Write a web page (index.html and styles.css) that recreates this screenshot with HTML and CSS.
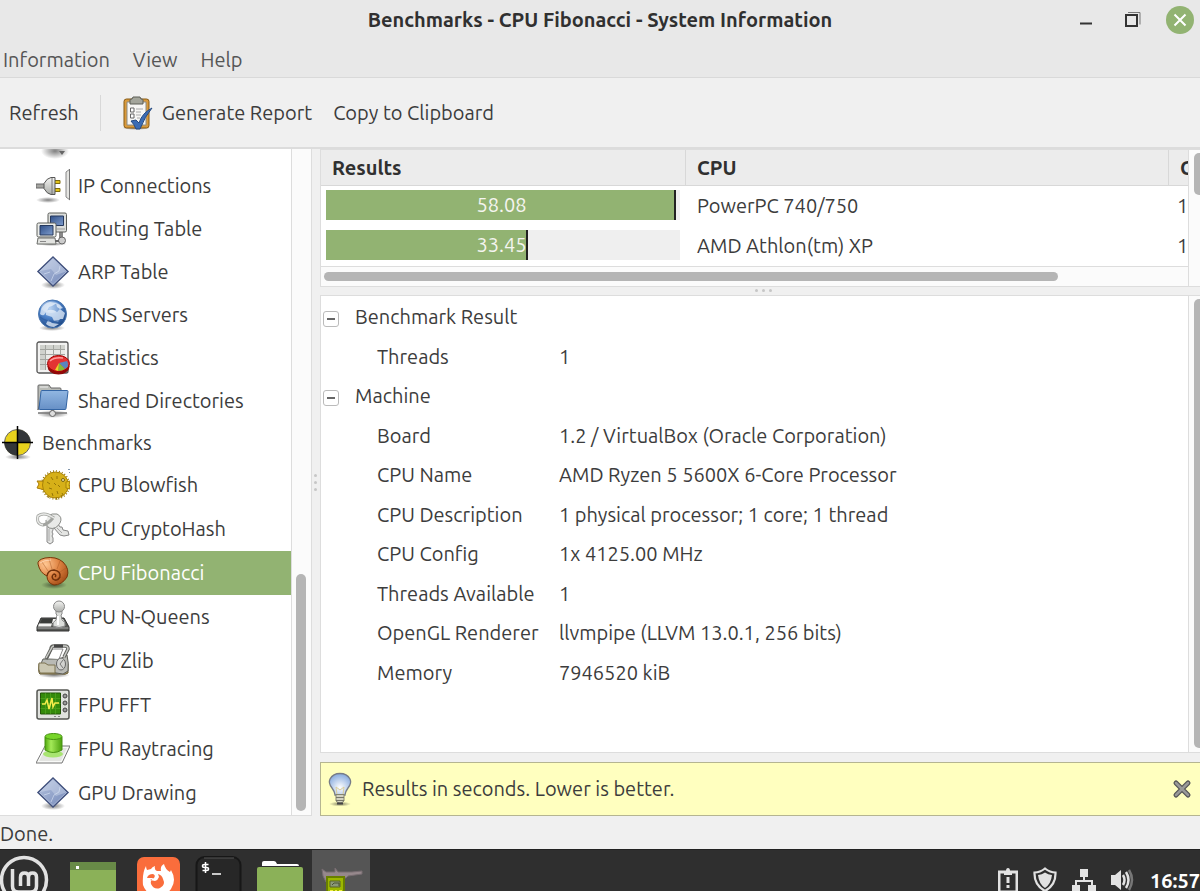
FILE: index.html
```html
<!DOCTYPE html>
<html lang="en">

<head>
    <meta charset="UTF-8">
    <title>Benchmarks - CPU Fibonacci - System Information</title>
    <link rel="stylesheet" href="styles.css">
</head>

<body>
    <!-- shared gradients -->
    <svg class="defs" aria-hidden="true">
        <defs>
            <linearGradient id="metal" x1="0" y1="0" x2="0" y2="1"><stop offset="0" stop-color="#f4f4f2"/><stop offset="1" stop-color="#aaaca8"/></linearGradient>
            <linearGradient id="screen" x1="0" y1="0" x2="1" y2="1"><stop offset="0" stop-color="#2f4f88"/><stop offset="1" stop-color="#7f9dcd"/></linearGradient>
            <linearGradient id="gem" x1="0" y1="0" x2="1" y2="1"><stop offset="0" stop-color="#b9c6e0"/><stop offset="1" stop-color="#7287b8"/></linearGradient>
            <radialGradient id="globe" cx=".4" cy=".3" r=".7"><stop offset="0" stop-color="#9fc2ec"/><stop offset=".5" stop-color="#4a7fc6"/><stop offset="1" stop-color="#204a87"/></radialGradient>
            <linearGradient id="folder" x1="0" y1="0" x2="0" y2="1"><stop offset="0" stop-color="#92b7e2"/><stop offset="1" stop-color="#6790c6"/></linearGradient>
            <radialGradient id="shell" cx=".25" cy=".25" r=".9"><stop offset="0" stop-color="#ffc793"/><stop offset=".5" stop-color="#df8443"/><stop offset="1" stop-color="#a14a14"/></radialGradient>
            <linearGradient id="can" x1="0" y1="0" x2="1" y2="0"><stop offset="0" stop-color="#4ea80c"/><stop offset=".35" stop-color="#a4ea58"/><stop offset="1" stop-color="#4ba00d"/></linearGradient>
            <radialGradient id="glass" cx=".5" cy=".65" r=".6"><stop offset="0" stop-color="#fff"/><stop offset="1" stop-color="#8fb0e0"/></radialGradient>
            <radialGradient id="shade"><stop offset="0" stop-color="#000" stop-opacity=".5"/><stop offset="1" stop-color="#000" stop-opacity="0"/></radialGradient>
        </defs>
        <symbol id="i-gem" viewBox="0 0 34 34">
            <ellipse cx="17" cy="30" rx="12" ry="4" fill="url(#shade)"/>
            <path d="M17 2 32 16.500 17 31 2 16.500z" fill="url(#gem)" stroke="#42527e" stroke-width="1.500"/>
            <path d="M17 4 30 16.500 20 20l-5-6-11 2z" fill="#dde5f3" opacity=".35"/>
            <path d="m15 26 3-7 5-3 1-5M8 19l6-2" fill="none" stroke="#dbe4f5" opacity=".6"/>
            <path d="M17 3.500 30.500 16.500 17 29.500 3.500 16.500z" fill="none" stroke="#cdd7eb" opacity=".5"/>
        </symbol>
    </svg>

    <div class="window">
        <header class="titlebar">
            <h1>Benchmarks - CPU Fibonacci - System Information</h1>
            <div class="window-buttons">
                <button aria-label="Minimize"><svg width="14" height="28"><path d="M1 17.500h12" stroke="#333" stroke-width="2"/></svg></button>
                <button aria-label="Restore"><svg width="18" height="28"><path d="M5 6.500h12v12" fill="none" stroke="#777" stroke-width="1"/><path d="M3 9h11v11H3z" fill="none" stroke="#333" stroke-width="2"/></svg></button>
                <button aria-label="Close"><svg width="28" height="28"><circle cx="14" cy="14" r="14" fill="#92b372"/><path d="m8.500 8.500 11 11m0-11-11 11" stroke="#fff" stroke-width="2"/></svg></button>
            </div>
        </header>

        <nav class="menubar">
            <button>Information</button>
            <button>View</button>
            <button>Help</button>
        </nav>

        <div class="toolbar">
            <button>Refresh</button>
            <div class="separator"></div>
            <button class="report">
                <svg width="32" height="34" viewBox="0 0 32 34">
                    <ellipse cx="14" cy="32" rx="14" ry="2" fill="url(#shade)"/>
                    <rect x="2" y="3" width="25" height="29" rx="2.500" fill="#d99a3b" stroke="#875a15"/>
                    <path d="M5 6h19v23H5z" fill="#f7f7f5" stroke="#8c8c86"/>
                    <path d="M8 8V4q0-1 2-1l1-2h7l1 2q2 0 2 1v4z" fill="#a3a59b" stroke="#5c5e57"/>
                    <path d="M8.500 12h3.500v4H8.500zM8.500 18h3.500v4H8.500z" fill="#fff" stroke="#666"/>
                    <path d="M14 13h7M14 16h5M14 19h5M15 22h3" stroke="#aaa"/>
                    <path d="m9 25 5-1 3 3q3-10 13-15-7 8-12 21h-4q-2-5-5-8z" fill="#3b6cb4" stroke="#244a83"/>
                </svg>
                Generate Report
            </button>
            <button>Copy to Clipboard</button>
        </div>

        <main class="content">
            <aside class="sidebar">
                <ul class="modules">
                    <li><svg><ellipse cx="19" cy="25" rx="14" ry="8" fill="url(#shade)"/><path d="m23 25 6 0-3 4z" fill="#666"/></svg></li>
                    <li>
                        <svg viewBox="0 0 34 34">
                            <ellipse cx="12" cy="31" rx="12" ry="3" fill="url(#shade)"/>
                            <path d="M0 15h10v4H0z" fill="#a5a5a1" stroke="#666"/>
                            <path d="M18 11.500h6v3h-6zM18 19.500h6v3h-6z" fill="#e1c31b" stroke="#806c0a"/>
                            <path d="M8 14.500q3-5.500 7-6h4v17h-4q-4-.5-7-6z" fill="url(#metal)" stroke="#555"/>
                            <path d="M16 9v16" stroke="#777"/>
                            <path d="m30 3 4-3v31l-4-3z" fill="#e5e5e2" stroke="#888"/>
                            <path d="M34 0v31" stroke="#777" stroke-width="2"/>
                        </svg>
                        <a href="#">IP Connections</a>
                    </li>
                    <li>
                        <svg viewBox="0 0 34 34">
                            <ellipse cx="16" cy="32" rx="15" ry="2" fill="url(#shade)"/>
                            <path d="M25 20v8" fill="none" stroke="#888" stroke-width="4"/>
                            <rect x="12" y="1" width="18.500" height="19" rx="1.500" fill="#dcdedb" stroke="#5c5e5a"/>
                            <path d="M14.500 4h13v9.500h-13z" fill="url(#screen)" stroke="#26395d"/>
                            <path d="M21 17h8" stroke="#999"/>
                            <rect x="1" y="11" width="19" height="14" rx="1.500" fill="#eceeeb" stroke="#5c5e5a"/>
                            <path d="M4 13.500h13V23H4z" fill="url(#screen)" stroke="#26395d"/>
                            <path d="M2 26h17l1 6H1z" fill="#e2e3e0" stroke="#6c6e6a"/>
                            <path d="M4 29.500h6" stroke="#888"/>
                            <circle cx="26" cy="28.500" r="3.500" fill="#ccc" stroke="#666"/><path d="M19 29h4" stroke="#666" stroke-width="2"/>
                        </svg>
                        <a href="#">Routing Table</a>
                    </li>
                    <li>
                        <svg><use href="#i-gem"/></svg>
                        <a href="#">ARP Table</a>
                    </li>
                    <li>
                        <svg viewBox="0 0 34 34">
                            <ellipse cx="16" cy="30" rx="13" ry="3" fill="url(#shade)"/>
                            <circle cx="16.500" cy="16" r="14" fill="url(#globe)" stroke="#4c79b3"/>
                            <path d="M5 11q3-6 9-7l7 1-5 3-3 1-2 4-3 4q-2 1-4-1zM10 13q6-3 11 1l3-3 5 4-2 6-3 0-2 3-4-1-2-4-6-2zM12 22l4 3 7 1-5 3q-5 0-8-3zM20 5q4 1 7 5l-3 1-3-2z" fill="#e6eff9" opacity=".75"/>
                            <path d="M4 19q9 7 23 3" fill="none" stroke="#2d5c9f" stroke-width="1.500" opacity=".7"/>
                            <ellipse cx="15" cy="9" rx="10" ry="6" fill="#fff" opacity=".25"/>
                        </svg>
                        <a href="#">DNS Servers</a>
                    </li>
                    <li>
                        <svg viewBox="0 0 34 34">
                            <rect x="1" y="1" width="31" height="31" rx="2" fill="#f2f2f1" stroke="#555" stroke-width="1.300"/>
                            <path d="M4 4h25v25H4z" fill="#e9eae7"/>
                            <path d="M4 4h5v25H4zM4 4h25v4H4z" fill="#d0d2cd"/>
                            <path d="M4 8.500h25M4 13.500h25M4 18.500h25M4 23.500h25M9.500 4v25M17.500 4v25M24.500 4v25" stroke="#a3a5a0"/>
                            <ellipse cx="22.500" cy="25.500" rx="11" ry="8" fill="#8f0909"/>
                            <ellipse cx="22.500" cy="22.500" rx="11" ry="8" fill="#e33333" stroke="#a40000"/>
                            <path d="m23 22 8-2q3 5-2 8z" fill="#5986c0"/>
                            <path d="m23 22 6 6q-3 2-7 2z" fill="#83bc38"/>
                            <path d="m23 22-1 8-3-1z" fill="#edd423"/>
                            <path d="M14 20q4-4 13-3" fill="none" stroke="#ff9d9d" stroke-width="1.500"/>
                        </svg>
                        <a href="#">Statistics</a>
                    </li>
                    <li>
                        <svg viewBox="0 0 34 34">
                            <ellipse cx="17" cy="30" rx="16" ry="4" fill="url(#shade)"/>
                            <path d="M2 26V2q0-1 1-1h10l2 3h9q1 0 1 1v5H7z" fill="#b9bbb6" stroke="#666"/>
                            <path d="M4 3h8" stroke="#eee"/>
                            <path d="M6 6.500h25q1 0 1 1l-2 17q0 1-1 1H4q-1 0-1-1l2-17q0-1 1-1z" fill="url(#folder)" stroke="#3465a4"/>
                            <path d="M2 29h29" stroke="#777" stroke-width="1.500"/>
                            <path d="M16.500 26v3" stroke="#888" stroke-width="3"/>
                            <circle cx="16.500" cy="29.500" r="3" fill="#ddd" stroke="#666"/>
                        </svg>
                        <a href="#">Shared Directories</a>
                    </li>
                    <li class="group">
                        <svg viewBox="0 0 34 34">
                            <ellipse cx="18" cy="31" rx="13" ry="3" fill="url(#shade)"/>
                            <circle cx="17.500" cy="16.500" r="13" fill="#e8d21d" stroke="#666"/>
                            <path d="M17.500 16.500v-13a13 13 0 0 1 13 13zM17.500 16.500v13a13 13 0 0 1-13-13z" fill="#333638"/>
                            <path d="M17.500 0v33M2 16.500h31" stroke="#000" stroke-width="1.500"/>
                        </svg>
                        <a href="#">Benchmarks</a>
                    </li>
                    <li class="bench">
                        <svg viewBox="0 0 34 34">
                            <circle cx="19.500" cy="17" r="14" fill="none" stroke="#9a7a08" stroke-width="1.500" stroke-dasharray="1 2"/>
                            <path d="m9 14-4-1-4 0 2 3-2 4 4 1 4 1z" fill="#e6b619" stroke="#a77b08"/>
                            <circle cx="19.500" cy="17" r="13" fill="#d6b018" stroke="#a98207"/>
                            <path d="m30 14 4-1-1 4 1 4-4-1z" fill="#e5c321" stroke="#a98207"/>
                            <path d="m11 14 3 2m1-7 2 3m4-4v3m-8 9 3 1m2-6 2 2m-4 8 1 3m5-11 2 2m-3 4 1 3m4-1 1 2m-7 2 1 3m-9-2 1-2m12-1 1 2" stroke="#957608"/>
                            <circle cx="27" cy="12" r="1.500" fill="#f6e9a8" stroke="#76620f"/>
                            <path d="M33 1v1m1 2v1" stroke="#8095ac" stroke-width="2"/>
                        </svg>
                        <a href="#">CPU Blowfish</a>
                    </li>
                    <li class="bench">
                        <svg viewBox="0 0 34 34">
                            <path d="m20 9 4 6 2 0 1 3 5 1 1 4-5 1-4-1-6-7-3-5z" fill="#e4e5e3" stroke="#888"/>
                            <path d="M11 13h6v5l-1 2 1 2-1 2 1 2v4l-3 2-3-2V16z" fill="#e4e5e3" stroke="#888"/>
                            <path d="M13 17v12m8-13 5 5" stroke="#aaa"/>
                            <path d="M12 4q4-3 9-2 6 3 3 9-4 7-11 5-4-3-3-8" fill="#e9eae8" stroke="#8a8c88"/>
                            <path d="M18 6Q8-1 2 4q-2 8 5 9 5-1 10-7" fill="none" stroke="#a2a4a0" stroke-width="3"/>
                            <path d="M18 6Q8-1 2 4q-2 8 5 9" fill="none" stroke="#e9eae8" stroke-width="1.500"/>
                        </svg>
                        <a href="#">CPU CryptoHash</a>
                    </li>
                    <li class="bench selected">
                        <svg viewBox="0 0 34 34">
                            <ellipse cx="18" cy="29" rx="13" ry="4" fill="url(#shade)"/>
                            <path d="M2 8Q1 4 9 2 20 0 27 6q7 7 4 15-5 8-13 8-7-2-7-9-7-3-9-12z" fill="url(#shell)" stroke="#7a3509"/>
                            <path d="M11 20q1-6 7-6 7 1 6 7-3 5-7 2-2-3 1-5 3 1 1 3" fill="none" stroke="#70300a" stroke-width="1.500"/>
                            <path d="m12 15-6-9m10 7-3-10m8 10 3-8m0 11 6-4m-6 8 6 4m-9 0 1 5" stroke="#a75621" opacity=".45"/>
                            <path d="M4 7q4-3 11-3" fill="none" stroke="#ffe0c4" opacity=".7"/>
                        </svg>
                        <a href="#" aria-current="page">CPU Fibonacci</a>
                    </li>
                    <li class="bench">
                        <svg viewBox="0 0 34 34">
                            <path d="M5 18h23l5 9v4H1v-4z" fill="#555753" stroke="#333"/>
                            <path d="M6 19h12l-1 4H4z" fill="#3a3c39"/>
                            <path d="M17 19h10l2 4H16zM3 23.500h13l-1 3H2z" fill="#f3f3f1"/>
                            <path d="M1.500 28h31" stroke="#aaa"/>
                            <path d="M20 11h6v3l-1 1 1 5q4 2 3 6-6 3-12 0-1-4 3-6l1-5-1-1z" fill="#dcdedb" stroke="#888"/>
                            <path d="M22 16v9" stroke="#fff" stroke-width="2"/>
                            <circle cx="23" cy="6.500" r="5.500" fill="url(#metal)" stroke="#888"/>
                        </svg>
                        <a href="#">CPU N-Queens</a>
                    </li>
                    <li class="bench">
                        <svg viewBox="0 0 34 34">
                            <ellipse cx="18" cy="31" rx="16" ry="3" fill="url(#shade)"/>
                            <path d="M3 20h29v9q-3 2-6 1H4q-2-1-1-10z" fill="#aa9c6d" stroke="#665b35"/>
                            <path d="M7 15h17l7-4q2 8 1 16l-5 3-20-3q-4-5 0-12z" fill="#b9bab5" stroke="#5d5e59"/>
                            <path d="M12 14 16 5h11l-4 10" fill="#fff" stroke="#888"/>
                            <path d="m10 15 5-10q0-3 3-3h11q3 0 3 3l-4 8" fill="none" stroke="#60615d" stroke-width="3.500"/>
                            <path d="m10 14 5-9q1-3 3-3h11q3 0 3 3l-4 8" fill="none" stroke="#c9cac6" stroke-width="1.500"/>
                            <path d="M18 2h9" stroke="#444" stroke-width="3"/>
                            <path d="M3 19h6l3 2h7v8H4q-2-3-1-10z" fill="#cbc7b2" stroke="#7c7250"/>
                            <ellipse cx="25" cy="20" rx="4.500" ry="6" fill="#d2d3d0" stroke="#666"/>
                            <path d="m27 16-3 4 3 4" fill="none" stroke="#777"/>
                        </svg>
                        <a href="#">CPU Zlib</a>
                    </li>
                    <li class="bench">
                        <svg viewBox="0 0 34 34">
                            <rect x="1" y="2" width="32" height="29" rx="2" fill="#e0e2de" stroke="#555753" stroke-width="1.500"/>
                            <path d="M4.500 5h20v21h-20z" fill="#348a0b" stroke="#235508"/>
                            <path d="M4.500 10.500h20m-20 5h20m-20 5h20M9.500 5v21m5-21v21m5-21v21" stroke="#58ab25" opacity=".6"/>
                            <path d="M6 16h3l2-4 2 9 3-11 1 9 2-4h4" fill="none" stroke="#f5ec49" stroke-width="1.500"/>
                            <g fill="#999" stroke="#444"><circle cx="29" cy="8" r="2"/><circle cx="29" cy="15" r="2"/><circle cx="29" cy="22" r="2"/></g>
                            <path d="M18 28.500h8" stroke="#888" stroke-dasharray="2 2"/>
                        </svg>
                        <a href="#">FPU FFT</a>
                    </li>
                    <li class="bench">
                        <svg viewBox="0 0 34 34">
                            <path d="M9 14h25L26 31H0z" fill="#f9faf8" stroke="#777"/>
                            <path d="M10 16h21l-6 13H3z" fill="#e4e5e2"/>
                            <ellipse cx="17" cy="22" rx="10" ry="3.500" fill="#a8e471"/>
                            <path d="M9 5v13q8 5 17 0V5z" fill="url(#can)" stroke="#469212"/>
                            <ellipse cx="17.500" cy="4.500" rx="8.500" ry="3" fill="#77d52a" stroke="#469212"/>
                        </svg>
                        <a href="#">FPU Raytracing</a>
                    </li>
                    <li class="bench">
                        <svg><use href="#i-gem"/></svg>
                        <a href="#">GPU Drawing</a>
                    </li>
                </ul>
                <div class="scroll-v"><div class="thumb"></div></div>
            </aside>

            <div class="grip grip-v"><i></i><i></i><i></i></div>

            <section class="panes">
                <div class="pane results">
                    <div class="view">
                        <table>
                            <colgroup><col class="col-result"><col class="col-cpu"><col></colgroup>
                            <thead>
                                <tr><th>Results</th><th>CPU</th><th>C</th></tr>
                            </thead>
                            <tbody>
                                <tr>
                                    <td class="meter"><div class="bar"><div class="fill" style="width: 99%"></div><span>58.08</span></div></td>
                                    <td>PowerPC 740/750</td>
                                    <td class="config">1</td>
                                </tr>
                                <tr>
                                    <td class="meter"><div class="bar"><div class="fill" style="width: 57%"></div><span>33.45</span></div></td>
                                    <td>AMD Athlon(tm) XP</td>
                                    <td class="config">1</td>
                                </tr>
                            </tbody>
                        </table>
                        <div class="scroll-h"><div class="thumb"></div></div>
                    </div>
                    <div class="scroll-v"><div class="thumb"></div></div>
                </div>

                <div class="grip grip-h"><i></i><i></i><i></i></div>

                <div class="pane details">
                    <div class="view">
                        <table>
                            <colgroup><col class="col-name"><col></colgroup>
                            <tr class="head"><th colspan="2"><button aria-label="Collapse Benchmark Result"></button>Benchmark Result</th></tr>
                            <tr><th>Threads</th><td>1</td></tr>
                            <tr class="head"><th colspan="2"><button aria-label="Collapse Machine"></button>Machine</th></tr>
                            <tr><th>Board</th><td>1.2 / VirtualBox (Oracle Corporation)</td></tr>
                            <tr><th>CPU Name</th><td>AMD Ryzen 5 5600X 6-Core Processor</td></tr>
                            <tr><th>CPU Description</th><td>1 physical processor; 1 core; 1 thread</td></tr>
                            <tr><th>CPU Config</th><td>1x 4125.00 MHz</td></tr>
                            <tr><th>Threads Available</th><td>1</td></tr>
                            <tr><th>OpenGL Renderer</th><td>llvmpipe (LLVM 13.0.1, 256 bits)</td></tr>
                            <tr><th>Memory</th><td>7946520 kiB</td></tr>
                        </table>
                    </div>
                    <div class="scroll-v"><div class="thumb"></div></div>
                </div>

                <div class="infobar">
                    <svg width="26" height="34" viewBox="0 0 26 34">
                        <ellipse cx="13" cy="32" rx="11" ry="2.500" fill="url(#shade)"/>
                        <path d="M8 23q0-3-3-7-4-5-2-9 3-5.500 10-5.500T23 7q2 4-2 9-3 4-3 7z" fill="url(#glass)" stroke="#777c88" stroke-width="1.300"/>
                        <path d="m10 23-1-8 4 3 4-3-1 8" fill="none" stroke="#ddd09b"/>
                        <path d="M9 22.500h8V29q-4 4-8 0z" fill="#d3d3c2" stroke="#85856f"/>
                        <path d="M9 25.500h8M9 28.500h8" stroke="#77776a"/>
                        <path d="M10 31.500h6" stroke="#444" stroke-width="2"/>
                    </svg>
                    <span>Results in seconds. Lower is better.</span>
                    <button aria-label="Close message"><svg width="20" height="20"><path d="m4 4 12 12m0-12L4 16" stroke="#555" stroke-width="5" stroke-linecap="round"/><path d="m4 4 12 12m0-12L4 16" stroke="#999" stroke-width="2.500" stroke-linecap="round"/></svg></button>
                </div>
            </section>
        </main>

        <footer class="statusbar">Done.</footer>
    </div>

    <div class="taskbar">
        <div class="launchers">
            <button aria-label="Menu"><svg viewBox="0 0 58 60">
                <circle cx="24" cy="30" r="22.500" fill="none" stroke="#e2e2e2" stroke-width="3.500"/>
                <path d="M12.500 19v17q0 6 6 6h12q6 0 6-6v-9q0-4-4-4t-4 4v9m0-9q0-4-4-4t-4 4v9" fill="none" stroke="#e2e2e2" stroke-width="3.500"/>
            </svg></button>
            <button aria-label="Show desktop"><svg viewBox="0 0 58 60"><path d="M12 12h46v40H12z" fill="#8bb158"/><path d="M12 12h46v8H12z" fill="#688a47"/><path d="M18 16h3v3h-3z" fill="#fff"/></svg></button>
            <button aria-label="Firefox"><svg viewBox="0 0 58 60">
                <rect x="21" y="7" width="43" height="44" rx="7" fill="#fa6d3c"/>
                <path d="M30 16q0 2 1 4l4-1q1-2 4-3-1 4 2 5l4 0q-1-5 3-7 1 5 6 8l1-2q6 10 0 19-6 8-15 7-10-2-13-11-1-12 3-19z" fill="#fff"/>
                <path d="M37 24q-5 0-6 4l6 0q-3 3-2 6 3 6 9 4 6-3 3-9-1-4-5-5l1 3q-1 3-4 4l-5-1 4-2q2-3-1-4z" fill="#fa6d3c"/>
            </svg></button>
            <button aria-label="Terminal"><svg viewBox="0 0 58 60">
                <rect x="22.500" y="7" width="44" height="45" rx="8" fill="#272727" stroke="#171717" stroke-width="2"/>
                <path d="M30 8h30" stroke="#555"/>
                <path d="M34.500 14.500h-4q-2 0-2 1.500t2 1.500h2q2 0 2 1.500t-2 1.500h-4M31.500 12v11M38 24h9" fill="none" stroke="#fff" stroke-width="1.500"/>
            </svg></button>
            <button aria-label="Files"><svg viewBox="0 0 58 60"><path d="M30 16v-3q0-2 2-2h10q2 0 3 3h20q2 0 2 2z" fill="#fff"/><rect x="25" y="17" width="46" height="40" rx="2" fill="#8bb158"/></svg></button>
            <button class="running" aria-label="System Information"><svg viewBox="0 0 58 60">
                <path d="m10 19 4 3h9v-4l3 4h14l10-1v3l-14 2-2 2H17l-3 4-3-6z" fill="#96888c" stroke="#776c71"/>
                <path d="M15 27h17v31H15z" fill="#9cb700" stroke="#687f00" stroke-width="2"/>
                <path d="M18 31h10v6H18z" fill="#8a9879" stroke="#566127"/><path d="m20 35 2-2h5v3" fill="none" stroke="#4a5332"/>
                <path d="M18 41h3m2 0h2m2 0h3" stroke="#f1ee3a" stroke-width="2"/>
            </svg></button>
        </div>
        <div class="tray">
            <svg width="20" height="26" viewBox="0 0 20 26"><path d="M1 5h18v20H1z" fill="none" stroke="#e2e2e2" stroke-width="3"/><path d="M6 8V4h2q0-3 2-3t2 3h2v4z" fill="#e2e2e2"/><path d="M10 10v6m0 2v3" stroke="#e2e2e2" stroke-width="3"/></svg>
            <svg width="24" height="26" viewBox="0 0 24 26"><path d="M12 1.500q5 4 10.500 4Q23 18 12 24 1 18 1.500 5.500 7 5.500 12 1.500z" fill="none" stroke="#e2e2e2" stroke-width="2.200"/><path d="M12 5.500q3 2 7 2.500-1 9-7 13-6-4-7-13 4-.5 7-2.500z" fill="#e2e2e2"/></svg>
            <svg width="24" height="26" viewBox="0 0 24 26"><path d="M8 2h8v8H8zM0 18h8v8H0zM16 18h8v8h-8z" fill="#e2e2e2"/><path d="M12 8v6M4 20v-6h16v6" fill="none" stroke="#e2e2e2" stroke-width="2"/></svg>
            <svg width="24" height="26" viewBox="0 0 24 26"><path d="M0 8h4l6-5v20l-6-5H0z" fill="#e2e2e2"/><path d="M12 8q3 5 0 10M15 5q5 8 0 16" fill="none" stroke="#e2e2e2" stroke-width="2.500"/><path d="M18 3q6 10 0 20" fill="none" stroke="#777" stroke-width="2.500"/></svg>
            <time>16:57</time>
        </div>
    </div>
</body>

</html>
```
FILE: styles.css
```css
* {
    margin: 0;
    padding: 0;
    box-sizing: border-box;
}

body {
    display: flex;
    flex-direction: column;
    height: 100vh;
    overflow: hidden;
    background: #f0f0f0;
    color: #3c3c3c;
    font: 20px/28px Ubuntu, "Noto Sans", sans-serif;
}

button {
    border: none;
    background: none;
    color: inherit;
    font: inherit;
    white-space: nowrap;
}

svg {
    display: block;
    flex: none;
}

.defs {
    position: absolute;
    width: 0;
    height: 0;
}

.window {
    flex: 1;
    min-height: 0;
    display: flex;
    flex-direction: column;
}

/* title, menu, toolbar */
.titlebar {
    display: grid;
    grid-template-columns: 1fr auto 1fr;
    align-items: center;
    height: 40px;
    background: #e8e8e8;
}

.titlebar h1 {
    grid-column: 2;
    font-size: 20px;
    font-weight: bold;
    color: #303030;
}

.window-buttons {
    justify-self: end;
    display: flex;
    gap: 25px;
    padding-right: 6px;
}

.window-buttons button:first-child {
    margin-right: 5px;
}

.menubar {
    display: flex;
    gap: 23px;
    height: 38px;
    padding: 6px 3px;
    background: #e8e8e8;
    border-bottom: 1px solid #d9d9d9;
    color: #555;
}

.toolbar {
    display: flex;
    align-items: center;
    gap: 21px;
    height: 71px;
    padding-left: 9px;
    border-bottom: 2px solid #dcdcdc;
}

.report {
    display: flex;
    align-items: center;
    gap: 8px;
}

.separator {
    width: 1px;
    height: 36px;
    background: #d8d8d8;
}

.content {
    flex: 1;
    min-height: 0;
    display: flex;
}

/* module tree */
.sidebar {
    display: flex;
    width: 312px;
    background: #fff;
    border-right: 1px solid #ddd;
    border-bottom: 1px solid #ddd;
}

.modules {
    flex: 1;
    display: flex;
    flex-direction: column;
    justify-content: flex-end;
    overflow: hidden;
    list-style: none;
}

.modules li {
    flex: none;
    display: flex;
    align-items: center;
    gap: 8px;
    height: 43px;
    padding-left: 36px;
}

.modules li.group {
    height: 41px;
    padding-left: 0;
}

.modules li.bench {
    height: 44px;
}

.modules li.selected {
    background: #92b372;
    color: #fff;
}

.modules svg {
    width: 34px;
    height: 34px;
}

.modules a {
    color: inherit;
    text-decoration: none;
}

/* scrollbars */
.thumb {
    background: #b5b5b5;
    border-radius: 5px;
}

.sidebar .scroll-v {
    width: 20px;
    padding: 425px 5px 4px 4px;
    background: #fbfbfb;
    border-left: 1px solid #ddd;
}

.scroll-v .thumb {
    height: 100%;
}

.scroll-h {
    height: 20px;
    padding: 5px 130px 5px 3px;
    background: #fbfbfb;
    border-top: 1px solid #ddd;
}

.scroll-h .thumb {
    height: 9px;
}

/* drag handles */
.grip {
    display: flex;
    align-items: center;
    justify-content: center;
    gap: 4px;
}

.grip i {
    width: 3px;
    height: 3px;
    border-radius: 50%;
    background: #c6c6c6;
}

.grip-v {
    flex-direction: column;
    width: 8px;
    padding-right: 2px;
}

.grip-h {
    height: 8px;
    padding: 0 0 2px 6px;
}

/* right side */
.panes {
    flex: 1;
    min-width: 0;
    display: flex;
    flex-direction: column;
}

.pane {
    display: flex;
    background: #fff;
    border: 1px solid #ddd;
    border-right: none;
}

.pane .view {
    flex: 1;
    min-width: 0;
    overflow: hidden;
}

.pane .scroll-v {
    width: 12px;
    padding: 3px 0 4px 5px;
    background: #fbfbfb;
    border-left: 1px solid #ddd;
}

.pane .scroll-v .thumb {
    border-radius: 5px 0 0 5px;
}

.results {
    height: 138px;
}

.results .scroll-v .thumb {
    height: 42px;
}

table {
    width: 100%;
    border-collapse: separate;
    border-spacing: 0;
    table-layout: fixed;
}

th {
    text-align: left;
    white-space: nowrap;
}

.col-result {
    width: 365px;
}

.col-cpu {
    width: 483px;
}

.results th {
    height: 36px;
    padding-left: 11px;
    background: #ececec;
    border-right: 1px solid #d8d8d8;
    border-bottom: 1px solid #d8d8d8;
    color: #303030;
    overflow: hidden;
}

.results th:last-child {
    padding-left: 11px;
    border-right: none;
}

.results td {
    height: 40px;
    padding-left: 11px;
}

.results .config {
    padding-left: 8px;
}

.results .meter {
    padding: 0 6px 2px 5px;
}

.bar {
    display: grid;
    height: 30px;
    background: #efefef;
}

.bar > * {
    grid-area: 1 / 1;
}

.bar span {
    align-self: center;
    padding-right: 3px;
    color: #f5f5f0;
    text-align: center;
}

.fill {
    background: #92b372;
    border-right: 2px solid #222;
}

.details {
    flex: 1;
}

.details table {
    margin-top: 1px;
}

.details tr {
    height: 40px;
}

.details tr:nth-child(even) {
    height: 39px;
}

.col-name {
    width: 238px;
}

.details th {
    padding-left: 56px;
    font-weight: normal;
}

.details .head th {
    padding-left: 2px;
}

.details .head button {
    display: inline-block;
    width: 16px;
    height: 16px;
    margin-right: 16px;
    padding: 0 3px;
    vertical-align: middle;
    border: 1px solid #bbb;
    border-radius: 3px;
    line-height: 0;
}

.details .head button::before {
    content: "";
    display: block;
    height: 2px;
    background: #666;
}

.infobar {
    display: flex;
    align-items: center;
    gap: 9px;
    height: 54px;
    margin-top: 9px;
    padding: 0 8px 0 6px;
    background: #ffffbf;
    border: 1px solid #b5b591;
    border-right: none;
}

.infobar button {
    margin-left: auto;
}

.statusbar {
    height: 33px;
    padding-top: 4px;
}

/* desktop panel, partly below the screen edge */
.taskbar {
    display: flex;
    justify-content: space-between;
    height: 42px;
    background: #2f2f2f;
    border-top: 1px solid #222;
    overflow: hidden;
}

.launchers {
    display: flex;
}

.launchers button {
    width: 58px;
    height: 60px;
}

.launchers svg {
    width: 58px;
    height: 60px;
    overflow: visible;
}

.launchers .running {
    margin-left: 22px;
    background: #555;
}

.tray {
    display: flex;
    gap: 15px;
    height: 26px;
    margin-top: 17px;
    color: #fff;
    font-weight: bold;
}
```
